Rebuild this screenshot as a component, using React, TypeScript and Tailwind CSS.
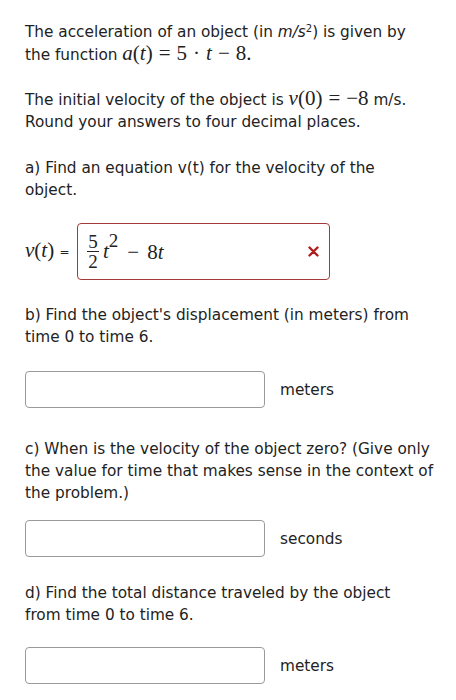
export default function App() {
  return (
    <div className="w-[456px] h-[700px] bg-white overflow-hidden text-[#222] text-[15.3px] leading-[22px] pl-[25px] pr-[21px] [font-family:'DejaVu_Sans',sans-serif]">
      <p className="pt-[21px]">
        The acceleration of an object (in <i>m/s</i>
        <sup className="text-[10px]">2</sup>) is given by the function{' '}
        <Math>
          <i>a</i>(<i>t</i>)<Op>=</Op>5<Op>·</Op>
          <i>t</i>
          <Op>−</Op>8.
        </Math>
      </p>
      <p className="mt-[22px]">
        The initial velocity of the object is{' '}
        <Math>
          <i>v</i>(0)<Op>=</Op>−8
        </Math>{' '}
        m/s. Round your answers to four decimal places.
      </p>
      <p className="mt-[24px]">
        a) Find an equation v(t) for the velocity of the
        <br />
        object.
      </p>
      <div className="mt-[22px] flex items-center">
        <span className="[font-family:'Liberation_Serif',serif] text-[21px] w-[52px] whitespace-nowrap">
          <i>v</i>(<i>t</i>) <span className="[font-family:'DejaVu_Sans',sans-serif] text-[12px] align-middle">=</span>
        </span>
        <div className="w-[253px] h-[57px] border-[1.5px] border-[#a33a3a] rounded-[4px] flex items-center pl-[9px] pr-[10px] justify-between">
          <span className="flex items-center [font-family:'Liberation_Serif',serif] text-[21px]">
            <span className="inline-flex flex-col items-center leading-[19px] text-[19px] mr-[4px]">
              <span>5</span>
              <span className="w-[12px] h-px bg-[#222]" />
              <span>2</span>
            </span>
            <span className="relative">
              <i>t</i>
              <span className="text-[19px] relative -top-[11px]">2</span>
            </span>
            <span className="ml-[9px]">−</span>
            <span className="ml-[8px]">
              8<i>t</i>
            </span>
          </span>
          <svg width="11" height="11" viewBox="0 0 11 11">
            <path d="M1.5 1.5 L9.5 9.5 M9.5 1.5 L1.5 9.5" stroke="#b01f1f" strokeWidth="2.4" strokeLinecap="round" />
          </svg>
        </div>
      </div>
      <p className="mt-[24px]">b) Find the object's displacement (in meters) from time 0 to time 6.</p>
      <AnswerRow unit="meters" className="mt-[23px]" />
      <p className="mt-[30px]">
        c) When is the velocity of the object zero? (Give only the value for time that makes sense in the context of the problem.)
      </p>
      <AnswerRow unit="seconds" className="mt-[16px]" />
      <p className="mt-[25px]">
        d) Find the total distance traveled by the object
        <br />
        from time 0 to time 6.
      </p>
      <AnswerRow unit="meters" className="mt-[21px]" />
    </div>
  );
}

function Math({ children }: { children: React.ReactNode }) {
  return <span className="[font-family:'Liberation_Serif',serif] text-[21px] leading-[20px]">{children}</span>;
}

function Op({ children }: { children: React.ReactNode }) {
  return <span className="mx-[6px]">{children}</span>;
}

function AnswerRow({ unit, className }: { unit: string; className: string }) {
  return (
    <div className={`flex items-center ${className}`}>
      <div className="w-[240px] h-[37px] border-[1.5px] border-[#9a9a9a] rounded-[4px]" />
      <span className="ml-[15px]">{unit}</span>
    </div>
  );
}
